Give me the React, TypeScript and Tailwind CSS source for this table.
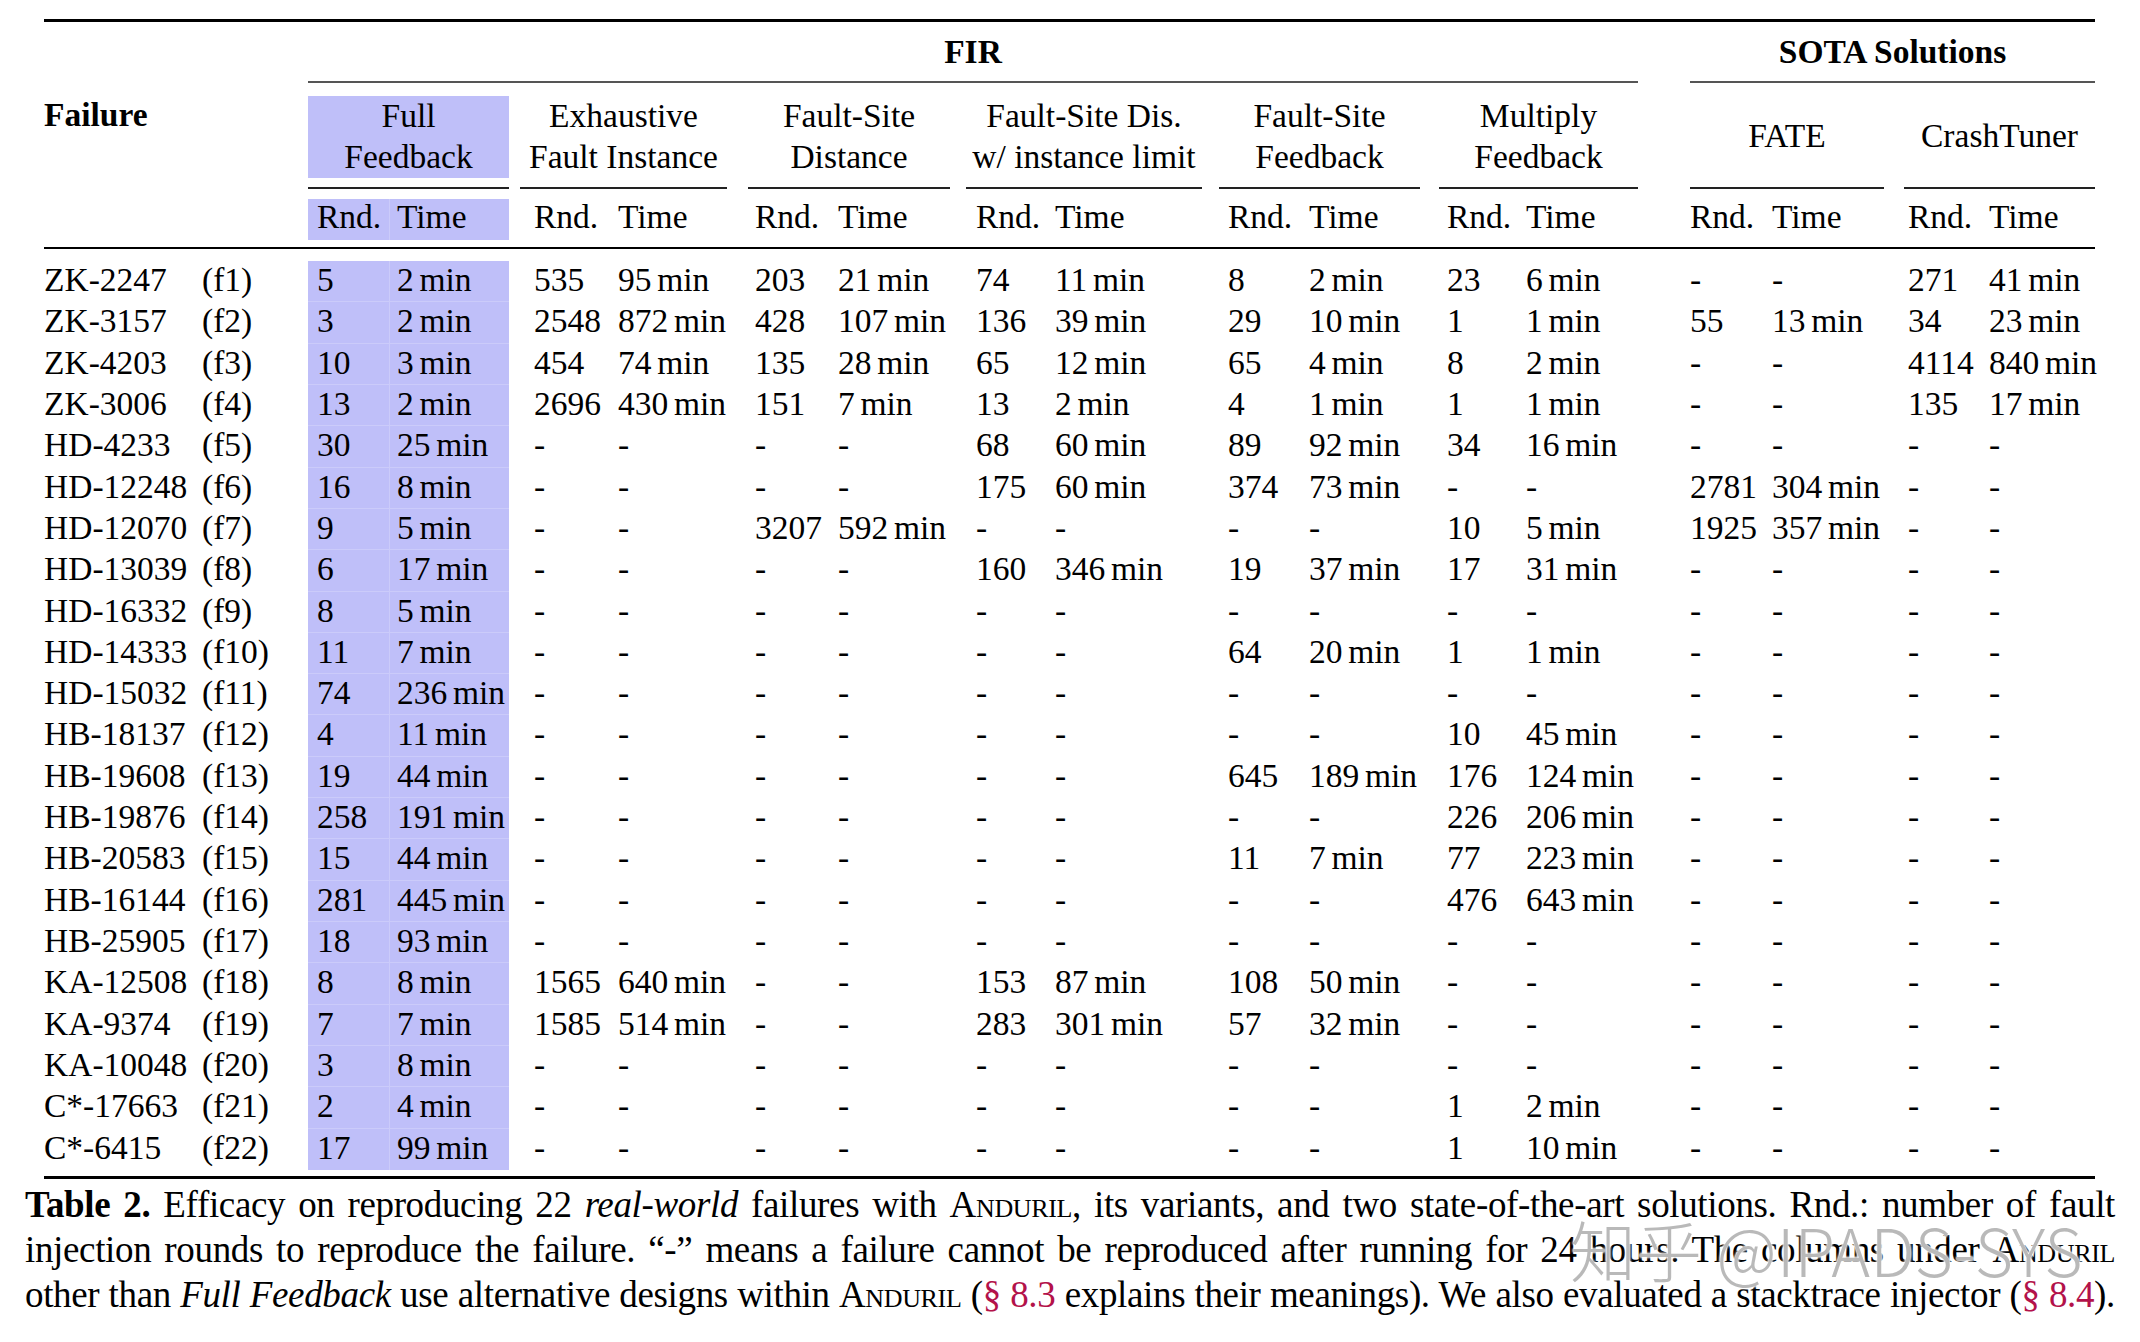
import { Fragment } from "react";
import clsx from "clsx";

type Row = { id: string; tag: string; vals: string[] };

const raw: [string, string, string][] = [
  ["ZK-2247", "f1", "5|2 min|535|95 min|203|21 min|74|11 min|8|2 min|23|6 min|-|-|271|41 min"],
  ["ZK-3157", "f2", "3|2 min|2548|872 min|428|107 min|136|39 min|29|10 min|1|1 min|55|13 min|34|23 min"],
  ["ZK-4203", "f3", "10|3 min|454|74 min|135|28 min|65|12 min|65|4 min|8|2 min|-|-|4114|840 min"],
  ["ZK-3006", "f4", "13|2 min|2696|430 min|151|7 min|13|2 min|4|1 min|1|1 min|-|-|135|17 min"],
  ["HD-4233", "f5", "30|25 min|-|-|-|-|68|60 min|89|92 min|34|16 min|-|-|-|-"],
  ["HD-12248", "f6", "16|8 min|-|-|-|-|175|60 min|374|73 min|-|-|2781|304 min|-|-"],
  ["HD-12070", "f7", "9|5 min|-|-|3207|592 min|-|-|-|-|10|5 min|1925|357 min|-|-"],
  ["HD-13039", "f8", "6|17 min|-|-|-|-|160|346 min|19|37 min|17|31 min|-|-|-|-"],
  ["HD-16332", "f9", "8|5 min|-|-|-|-|-|-|-|-|-|-|-|-|-|-"],
  ["HD-14333", "f10", "11|7 min|-|-|-|-|-|-|64|20 min|1|1 min|-|-|-|-"],
  ["HD-15032", "f11", "74|236 min|-|-|-|-|-|-|-|-|-|-|-|-|-|-"],
  ["HB-18137", "f12", "4|11 min|-|-|-|-|-|-|-|-|10|45 min|-|-|-|-"],
  ["HB-19608", "f13", "19|44 min|-|-|-|-|-|-|645|189 min|176|124 min|-|-|-|-"],
  ["HB-19876", "f14", "258|191 min|-|-|-|-|-|-|-|-|226|206 min|-|-|-|-"],
  ["HB-20583", "f15", "15|44 min|-|-|-|-|-|-|11|7 min|77|223 min|-|-|-|-"],
  ["HB-16144", "f16", "281|445 min|-|-|-|-|-|-|-|-|476|643 min|-|-|-|-"],
  ["HB-25905", "f17", "18|93 min|-|-|-|-|-|-|-|-|-|-|-|-|-|-"],
  ["KA-12508", "f18", "8|8 min|1565|640 min|-|-|153|87 min|108|50 min|-|-|-|-|-|-"],
  ["KA-9374", "f19", "7|7 min|1585|514 min|-|-|283|301 min|57|32 min|-|-|-|-|-|-"],
  ["KA-10048", "f20", "3|8 min|-|-|-|-|-|-|-|-|-|-|-|-|-|-"],
  ["C*-17663", "f21", "2|4 min|-|-|-|-|-|-|-|-|1|2 min|-|-|-|-"],
  ["C*-6415", "f22", "17|99 min|-|-|-|-|-|-|-|-|1|10 min|-|-|-|-"],
];

const rows: Row[] = raw.map(([id, tag, v]) => ({ id, tag, vals: v.split("|") }));

// padding of the Rnd. / Time cells in each column group
const groups = [
  { rnd: "pl-[9px]", time: "pl-[7px]" },
  { rnd: "pl-[14px]", time: "pl-[8px]" },
  { rnd: "pl-[7px]", time: "pl-[8px]" },
  { rnd: "pl-[10px]", time: "pl-[8px]" },
  { rnd: "pl-[9px]", time: "pl-[9px]" },
  { rnd: "pl-[8px]", time: "pl-[8px]" },
  { rnd: "pl-[0px]", time: "pl-[8px]" },
  { rnd: "pl-[4px]", time: "pl-[8px]" },
];

const GRID =
  "grid grid-cols-[158px_106px_82px_119px_11px_90px_117px_21px_82px_120px_16px_81px_155px_17px_81px_120px_19px_79px_120px_52px_74px_120px_20px_77px_114px]";

const HL = "bg-[#bfbff9]";

function Val({ v }: { v: string }) {
  if (v.endsWith(" min")) {
    return (
      <>
        {v.slice(0, -4)}
        <span className="ml-[0.17em]">min</span>
      </>
    );
  }
  return <>{v}</>;
}

function Rule({ className }: { className?: string }) {
  return <div className={clsx("w-full", className)} />;
}

const headers: [string, string | null][] = [
  ["Full", "Feedback"],
  ["Exhaustive", "Fault Instance"],
  ["Fault-Site", "Distance"],
  ["Fault-Site Dis.", "w/ instance limit"],
  ["Fault-Site", "Feedback"],
  ["Multiply", "Feedback"],
  ["FATE", null],
  ["CrashTuner", null],
];

const groupStart = ["col-start-3", "col-start-6", "col-start-9", "col-start-12", "col-start-15", "col-start-18", "col-start-21", "col-start-24"];

function Anduril() {
  return <span className="[font-variant-caps:small-caps]">Anduril</span>;
}

export default function App() {
  return (
    <div className="min-h-[1342px] w-[2140px] bg-white text-black font-['Liberation_Serif','Times_New_Roman',serif] text-[33.5px]">
      <div className="pl-[44px] w-[2095px] pt-[19px]">
        <Rule className="h-[3px] bg-black" />

        {/* top level groups */}
        <div className={GRID}>
          <div className="col-start-3 col-end-20 flex flex-col">
            <div className="h-[59px] leading-[59px] text-center font-bold">FIR</div>
            <Rule className="h-[2px] bg-[#555]" />
          </div>
          <div className="col-start-21 col-end-26 flex flex-col">
            <div className="h-[59px] leading-[59px] text-center font-bold">SOTA Solutions</div>
            <Rule className="h-[2px] bg-[#555]" />
          </div>
        </div>

        {/* method names */}
        <div className={GRID}>
          <div className="col-start-1 col-end-3 pt-[11px] leading-[41px] font-bold">Failure</div>
          {headers.map(([a, b], i) => (
            <div key={a + i} className={clsx(groupStart[i], "col-span-2 flex flex-col pt-[13px]")}>
              <div
                className={clsx(
                  "h-[82px] flex flex-col justify-center items-center leading-[41px] pb-[3px]",
                  i === 0 && HL
                )}
              >
                <div>{a}</div>
                {b && <div>{b}</div>}
              </div>
              <Rule className="mt-[9px] h-[2px] bg-[#222]" />
            </div>
          ))}
        </div>

        {/* Rnd. / Time */}
        <div className={clsx(GRID, "pt-[10px]")}>
          <div />
          <div />
          {groups.map((g, i) => (
            <Fragment key={i}>
              <div className={clsx(g.rnd, "h-[41px] leading-[36px]", i === 0 && clsx(HL, "border-r border-[#cbcbfa]"))}>
                Rnd.
              </div>
              <div className={clsx(g.time, "h-[41px] leading-[36px]", i === 0 && HL)}>Time</div>
              {i < groups.length - 1 && <div />}
            </Fragment>
          ))}
        </div>
        <Rule className="mt-[7px] h-[2px] bg-black" />

        {/* data */}
        <div className={clsx(GRID, "pt-[12px] auto-rows-[41.32px]")}>
          {rows.map((r, ri) => (
            <Fragment key={r.id}>
              <div className="leading-[37px]">{r.id}</div>
              <div className="leading-[37px]">({r.tag})</div>
              {groups.map((g, i) => (
                <Fragment key={i}>
                  <div
                    className={clsx(
                      g.rnd,
                      "leading-[37px]",
                      i === 0 && clsx(HL, "border-r border-[#cbcbfa]", ri < rows.length - 1 && "border-b")
                    )}
                  >
                    <Val v={r.vals[i * 2]} />
                  </div>
                  <div
                    className={clsx(
                      g.time,
                      "leading-[37px] whitespace-nowrap",
                      i === 0 && clsx(HL, "border-[#cbcbfa]", ri < rows.length - 1 && "border-b")
                    )}
                  >
                    <Val v={r.vals[i * 2 + 1]} />
                  </div>
                  {i < groups.length - 1 && <div />}
                </Fragment>
              ))}
            </Fragment>
          ))}
        </div>
        <Rule className="mt-[6px] h-[3px] bg-black" />
      </div>

      {/* caption */}
      <div className="relative ml-[25px] w-[2090px] pt-[3px] leading-[45px] text-[37px] tracking-[-0.35px]">
        <div className="text-justify [text-align-last:justify] whitespace-nowrap">
          <span className="font-bold">Table 2.</span> Efficacy on reproducing 22 <i>real-world</i> failures with{" "}
          <Anduril />, its variants, and two state-of-the-art solutions. Rnd.: number of fault
        </div>
        <div className="text-justify [text-align-last:justify] whitespace-nowrap">
          injection rounds to reproduce the failure. “-” means a failure cannot be reproduced after running for 24 hours. The
          columns under <Anduril />
        </div>
        <div className="text-justify [text-align-last:justify] whitespace-nowrap">
          other than <i>Full Feedback</i> use alternative designs within <Anduril /> (
          <span className="text-[#b3124a]">§ 8.3</span> explains their meanings). We also evaluated a stacktrace injector (
          <span className="text-[#b3124a]">§ 8.4</span>).
        </div>
        <div className="pointer-events-none absolute left-[1545px] top-[36px] whitespace-nowrap font-['Noto_Sans_CJK_SC','Noto_Sans',sans-serif] text-[66px] font-light leading-none tracking-normal text-[#a8a8a8]/80 [text-shadow:0_0_3px_#fff,0_0_3px_#fff,0_0_2px_#fff]">
          知乎 @IPADS-SYS
        </div>
      </div>
    </div>
  );
}
